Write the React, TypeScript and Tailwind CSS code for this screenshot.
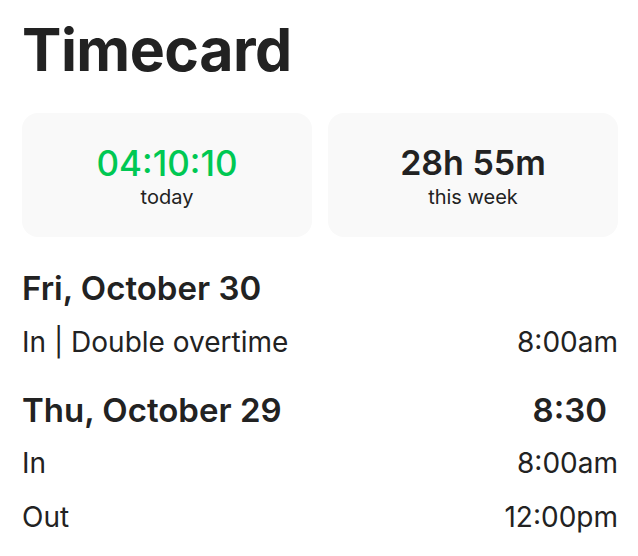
export default function App() {
  return (
    <div className="min-h-screen bg-white px-[22px] pr-[20px] pt-[15px] text-[#222222] font-['Inter',sans-serif]">
      <h1 className="text-[59px] font-bold leading-[70px] tracking-[-0.5px]">Timecard</h1>

      <div className="mt-[28px] grid grid-cols-2 gap-4">
        <div className="flex h-[124px] flex-col items-center justify-center rounded-2xl bg-[#f9f9f9] pt-[4px]">
          <div className="text-[35px] font-medium leading-[40px] text-[#00c853]">04:10:10</div>
          <div className="text-[20px] leading-[28px]">today</div>
        </div>
        <div className="flex h-[124px] flex-col items-center justify-center rounded-2xl bg-[#f9f9f9] pt-[4px]">
          <div className="text-[34px] font-semibold leading-[40px]">28h 55m</div>
          <div className="text-[20px] leading-[28px]">this week</div>
        </div>
      </div>

      <div className="mt-[31px]">
        <div className="flex items-center justify-between">
          <span className="text-[33px] font-semibold leading-[40px]">Fri, October 30</span>
        </div>
        <div className="mt-[17px] flex items-center justify-between text-[28px] leading-[34px]">
          <span>In | Double overtime</span>
          <span>8:00am</span>
        </div>
      </div>

      <div className="mt-[31px]">
        <div className="flex items-center justify-between">
          <span className="text-[33px] font-semibold leading-[40px]">Thu, October 29</span>
          <span className="pr-[11px] text-[33px] font-semibold leading-[40px]">8:30</span>
        </div>
        <div className="mt-[16px] flex items-center justify-between text-[28px] leading-[34px]">
          <span>In</span>
          <span>8:00am</span>
        </div>
        <div className="mt-[20px] flex items-center justify-between text-[28px] leading-[34px]">
          <span>Out</span>
          <span>12:00pm</span>
        </div>
      </div>
    </div>
  );
}
